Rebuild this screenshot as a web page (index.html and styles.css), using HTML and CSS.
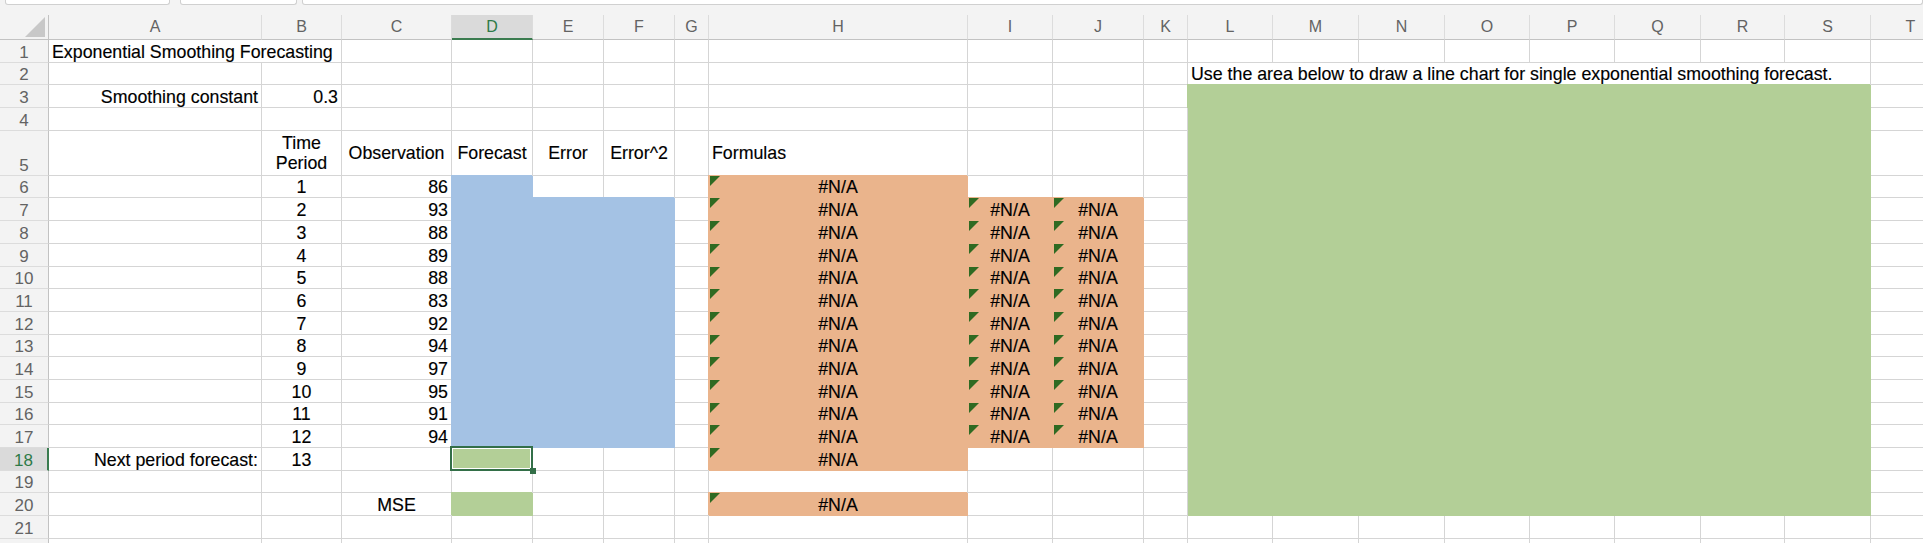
FILE: index.html
```html
<!DOCTYPE html>
<html>
<head>
<meta charset="utf-8">
<title>Exponential Smoothing Forecasting</title>
<link rel="stylesheet" href="styles.css">
</head>
<body>
<div class="topbar">
  <div class="box name"></div>
  <div class="box mid"></div>
  <div class="box formula"></div>
</div>
<div class="sheet">
  <div class="corner"></div>
  <div class="ch">A</div><div class="ch">B</div><div class="ch">C</div><div class="ch act">D</div><div class="ch">E</div><div class="ch">F</div><div class="ch">G</div><div class="ch">H</div><div class="ch">I</div><div class="ch">J</div><div class="ch">K</div><div class="ch">L</div><div class="ch">M</div><div class="ch">N</div><div class="ch">O</div><div class="ch">P</div><div class="ch">Q</div><div class="ch">R</div><div class="ch">S</div><div class="ch">T</div>

  <!-- row 1 -->
  <div class="rh">1</div>
  <div class="span2">Exponential Smoothing Forecasting</div>
  <div></div><div></div><div></div><div></div><div></div><div></div><div></div><div></div><div></div><div></div><div></div><div></div><div></div><div></div><div></div><div></div><div></div><div></div>

  <!-- row 2 -->
  <div class="rh">2</div>
  <div></div><div></div><div></div><div></div><div></div><div></div><div></div><div></div><div></div><div></div><div></div>
  <div class="span8">Use the area below to draw a line chart for single exponential smoothing forecast.</div>
  <div></div>

  <!-- row 3 -->
  <div class="rh">3</div>
  <div class="r">Smoothing constant</div>
  <div class="r">0.3</div>
  <div></div><div></div><div></div><div></div><div></div><div></div><div></div><div></div><div></div>
  <div class="gr chart"></div>
  <div></div>

  <!-- row 4 -->
  <div class="rh">4</div>
  <div></div><div></div><div></div><div></div><div></div><div></div><div></div><div></div><div></div><div></div><div></div>
  <div></div>

  <!-- row 5 -->
  <div class="rh">5</div>
  <div></div>
  <div class="hd wrap">Time Period</div>
  <div class="hd">Observation</div>
  <div class="hd">Forecast</div>
  <div class="hd">Error</div>
  <div class="hd">Error^2</div>
  <div></div>
  <div class="hd l">Formulas</div>
  <div></div><div></div><div></div>
  <div></div>

  <!-- row 6 -->
  <div class="rh">6</div>
  <div></div><div class="c">1</div><div class="r">86</div><div class="bl"></div><div></div><div></div><div></div>
  <div class="or tri c">#N/A</div><div></div><div></div><div></div>
  <div></div>

  <!-- row 7 -->
  <div class="rh">7</div>
  <div></div><div class="c">2</div><div class="r">93</div><div class="bl"></div><div class="bl"></div><div class="bl"></div><div></div>
  <div class="or tri c">#N/A</div><div class="or tri c">#N/A</div><div class="or tri c">#N/A</div><div></div>
  <div></div>

  <!-- row 8 -->
  <div class="rh">8</div>
  <div></div><div class="c">3</div><div class="r">88</div><div class="bl"></div><div class="bl"></div><div class="bl"></div><div></div>
  <div class="or tri c">#N/A</div><div class="or tri c">#N/A</div><div class="or tri c">#N/A</div><div></div>
  <div></div>

  <!-- row 9 -->
  <div class="rh">9</div>
  <div></div><div class="c">4</div><div class="r">89</div><div class="bl"></div><div class="bl"></div><div class="bl"></div><div></div>
  <div class="or tri c">#N/A</div><div class="or tri c">#N/A</div><div class="or tri c">#N/A</div><div></div>
  <div></div>

  <!-- row 10 -->
  <div class="rh">10</div>
  <div></div><div class="c">5</div><div class="r">88</div><div class="bl"></div><div class="bl"></div><div class="bl"></div><div></div>
  <div class="or tri c">#N/A</div><div class="or tri c">#N/A</div><div class="or tri c">#N/A</div><div></div>
  <div></div>

  <!-- row 11 -->
  <div class="rh">11</div>
  <div></div><div class="c">6</div><div class="r">83</div><div class="bl"></div><div class="bl"></div><div class="bl"></div><div></div>
  <div class="or tri c">#N/A</div><div class="or tri c">#N/A</div><div class="or tri c">#N/A</div><div></div>
  <div></div>

  <!-- row 12 -->
  <div class="rh">12</div>
  <div></div><div class="c">7</div><div class="r">92</div><div class="bl"></div><div class="bl"></div><div class="bl"></div><div></div>
  <div class="or tri c">#N/A</div><div class="or tri c">#N/A</div><div class="or tri c">#N/A</div><div></div>
  <div></div>

  <!-- row 13 -->
  <div class="rh">13</div>
  <div></div><div class="c">8</div><div class="r">94</div><div class="bl"></div><div class="bl"></div><div class="bl"></div><div></div>
  <div class="or tri c">#N/A</div><div class="or tri c">#N/A</div><div class="or tri c">#N/A</div><div></div>
  <div></div>

  <!-- row 14 -->
  <div class="rh">14</div>
  <div></div><div class="c">9</div><div class="r">97</div><div class="bl"></div><div class="bl"></div><div class="bl"></div><div></div>
  <div class="or tri c">#N/A</div><div class="or tri c">#N/A</div><div class="or tri c">#N/A</div><div></div>
  <div></div>

  <!-- row 15 -->
  <div class="rh">15</div>
  <div></div><div class="c">10</div><div class="r">95</div><div class="bl"></div><div class="bl"></div><div class="bl"></div><div></div>
  <div class="or tri c">#N/A</div><div class="or tri c">#N/A</div><div class="or tri c">#N/A</div><div></div>
  <div></div>

  <!-- row 16 -->
  <div class="rh">16</div>
  <div></div><div class="c">11</div><div class="r">91</div><div class="bl"></div><div class="bl"></div><div class="bl"></div><div></div>
  <div class="or tri c">#N/A</div><div class="or tri c">#N/A</div><div class="or tri c">#N/A</div><div></div>
  <div></div>

  <!-- row 17 -->
  <div class="rh">17</div>
  <div></div><div class="c">12</div><div class="r">94</div><div class="bl"></div><div class="bl"></div><div class="bl"></div><div></div>
  <div class="or tri c">#N/A</div><div class="or tri c">#N/A</div><div class="or tri c">#N/A</div><div></div>
  <div></div>

  <!-- row 18 -->
  <div class="rh act">18</div>
  <div class="r">Next period forecast:</div><div class="c">13</div><div></div><div class="gr sel"></div><div></div><div></div><div></div>
  <div class="or tri c">#N/A</div><div></div><div></div><div></div>
  <div></div>

  <!-- row 19 -->
  <div class="rh">19</div>
  <div></div><div></div><div></div><div></div><div></div><div></div><div></div><div></div><div></div><div></div><div></div>
  <div></div>

  <!-- row 20 -->
  <div class="rh">20</div>
  <div></div><div></div><div class="c">MSE</div><div class="gr"></div><div></div><div></div><div></div>
  <div class="or tri c">#N/A</div><div></div><div></div><div></div>
  <div></div>

  <!-- row 21 -->
  <div class="rh">21</div>
  <div></div><div></div><div></div><div></div><div></div><div></div><div></div><div></div><div></div><div></div><div></div><div></div><div></div><div></div><div></div><div></div><div></div><div></div><div></div><div></div>

  <!-- row 22 (only a sliver is visible) -->
  <div class="rh"></div>
  <div></div><div></div><div></div><div></div><div></div><div></div><div></div><div></div><div></div><div></div><div></div><div></div><div></div><div></div><div></div><div></div><div></div><div></div><div></div><div></div>
</div>
</body>
</html>
```
FILE: styles.css
```css
* { box-sizing: border-box; }

html, body {
  margin: 0;
  padding: 0;
  background: #ffffff;
  overflow: hidden;
}

body {
  width: 1923px;
  height: 543px;
  font-family: "Liberation Sans", Arial, sans-serif;
}

.topbar {
  height: 15px;
  background: #f3f3f3;
  display: flex;
  align-items: flex-start;
  padding-left: 5px;
}

.box {
  height: 5px;
  background: #ffffff;
  border: 1px solid #d0d0d0;
  border-top: none;
  border-radius: 0 0 3px 3px;
}

.box.name { width: 165px; margin-right: 10px; }
.box.mid { width: 117px; margin-right: 5px; }
.box.formula { flex: 1; }

.sheet {
  display: grid;
  width: 1951px;
  grid-template-columns: 49px 213px 80px 110px 81px 71px 71px 34px 259px 85px 91px 44px 85px 86px 86px 85px 85px 86px 84px 86px 80px;
  grid-template-rows: 25px repeat(4, 22.7px) 45px repeat(17, 22.7px);
}

.sheet > div {
  border-right: 1px solid #d5d5d5;
  border-bottom: 1px solid #d5d5d5;
  display: flex;
  align-items: flex-end;
  justify-content: flex-start;
  padding: 0 3px;
  font-size: 17.8px;
  line-height: 20px;
  color: #000000;
  white-space: nowrap;
  -webkit-text-stroke: 0.15px #000000;
}

/* headers */
.sheet > .corner {
  background: #f3f3f3;
  border-right: 1px solid #c2c2c2;
  border-bottom: 1px solid #c2c2c2;
  position: relative;
}

.corner::after {
  content: "";
  position: absolute;
  right: 3px;
  bottom: 2px;
  width: 0;
  height: 0;
  border-left: 20px solid transparent;
  border-bottom: 20px solid #c8c8c8;
}

.sheet > .ch {
  background: #f3f3f3;
  border-right: 1px solid #dcdcdc;
  border-bottom: 1px solid #c2c2c2;
  align-items: center;
  justify-content: center;
  font-size: 16px;
  line-height: 18px;
  color: #636363;
  -webkit-text-stroke: 0;
}

.sheet > .ch.act {
  background: #dadada;
  color: #2e7a48;
  border-bottom: 2px solid #3a7b4f;
}

.sheet > .rh {
  background: #f3f3f3;
  border-right: 1px solid #c2c2c2;
  border-bottom: 1px solid #dcdcdc;
  justify-content: center;
  font-size: 17px;
  line-height: 18px;
  color: #636363;
  -webkit-text-stroke: 0;
}

.sheet > .rh.act {
  background: #dadada;
  color: #2e7a48;
  border-right: 2px solid #3a7b4f;
}

/* alignment */
.sheet > .r { justify-content: flex-end; }
.sheet > .c { justify-content: center; }

.sheet > .hd {
  align-items: center;
  justify-content: center;
}

.sheet > .hd.l { justify-content: flex-start; }

.sheet > .wrap {
  white-space: normal;
  text-align: center;
}

.sheet > .span2 { grid-column: span 2; }
.sheet > .span8 { grid-column: span 8; }
.sheet > .chart { grid-column: span 8; grid-row: span 18; }

/* fills */
.sheet > .bl {
  background: #a4c2e4;
  border-color: transparent;
  box-shadow: -1px -1px 0 #a4c2e4;
}

.sheet > .or {
  background: #eab48c;
  border-color: transparent;
  box-shadow: -1px -1px 0 #eab48c;
}

.sheet > .gr {
  background: #b3cf97;
  border-color: transparent;
  box-shadow: -1px -1px 0 #b3cf97;
}

/* error indicator triangle */
.tri { position: relative; }

.tri::before {
  content: "";
  position: absolute;
  left: 1px;
  top: 0;
  width: 0;
  height: 0;
  border-top: 10px solid #2f6a22;
  border-right: 10px solid transparent;
}

/* active cell */
.sel { position: relative; }

.sel::after {
  content: "";
  position: absolute;
  left: -2px;
  top: -2px;
  right: -1px;
  bottom: -1px;
  border: 2px solid #336f48;
  box-shadow: inset 0 0 0 1px #ffffff;
}

.sel::before {
  content: "";
  position: absolute;
  right: -4px;
  bottom: -4px;
  width: 6px;
  height: 6px;
  background: #336f48;
  z-index: 1;
}
```
